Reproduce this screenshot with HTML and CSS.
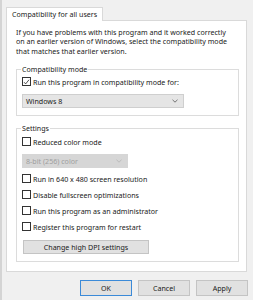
FILE: index.html
```html
<!DOCTYPE html>
<html>
<head>
<meta charset="utf-8">
<link rel="stylesheet" href="styles.css">
</head>
<body>
<div class="window">
  <div class="tabs"><div class="tab">Compatibility for all users</div></div>
  <div class="panel">
    <p class="intro">If you have problems with this program and it worked correctly<br>on an earlier version of Windows, select the compatibility mode<br>that matches that earlier version.</p>
    <fieldset class="group g1">
      <legend>Compatibility mode</legend>
      <div class="row"><span class="cb checked"><svg viewBox="0 0 8 8" width="8" height="8"><polyline points="1.2,4.2 3,6.2 6.9,1.4" fill="none" stroke="#222" stroke-width="0.9"/></svg></span><span>Run this program in compatibility mode for:</span></div>
      <div class="select wide"><span>Windows 8</span><svg class="chev" viewBox="0 0 6 4" width="6" height="4"><polyline points="0.5,0.8 3,3.2 5.5,0.8" fill="none" stroke="#555" stroke-width="0.8"/></svg></div>
    </fieldset>
    <fieldset class="group g2">
      <legend>Settings</legend>
      <div class="row first"><span class="cb"></span><span>Reduced color mode</span></div>
      <div class="select narrow disabled"><span>8-bit (256) color</span><svg class="chev" viewBox="0 0 6 4" width="6" height="4"><polyline points="0.5,0.8 3,3.2 5.5,0.8" fill="none" stroke="#b4b4b4" stroke-width="0.8"/></svg></div>
      <div class="row after"><span class="cb"></span><span>Run in 640 x 480 screen resolution</span></div>
      <div class="row"><span class="cb"></span><span>Disable fullscreen optimizations</span></div>
      <div class="row"><span class="cb"></span><span>Run this program as an administrator</span></div>
      <div class="row"><span class="cb"></span><span>Register this program for restart</span></div>
      <div class="btn dpi">Change high DPI settings</div>
    </fieldset>
  </div>
  <div class="buttons">
    <div class="btn action default">OK</div>
    <div class="btn action">Cancel</div>
    <div class="btn action">Apply</div>
  </div>
</div>
</body>
</html>
```
FILE: styles.css
```css
html, body {
  margin: 0;
  padding: 0;
}
body {
  width: 253px;
  height: 300px;
  overflow: hidden;
  background: #f0f0f0;
  font-family: "Noto Sans", "DejaVu Sans", sans-serif;
  font-size: 7.1px;
  color: #1a1a1a;
}
.window {
  box-sizing: border-box;
  height: 300px;
  border-left: 2px solid #d4d4d4;
  padding: 0 6px 0 4px;
}
.tabs {
  padding-top: 7px;
  height: 14px;
  position: relative;
  z-index: 1;
}
.tab {
  display: inline-block;
  box-sizing: border-box;
  height: 14px;
  line-height: 13px;
  padding: 0 5px;
  background: #fff;
  border: 1px solid #d9d9d9;
  border-bottom: none;
}
.panel {
  box-sizing: border-box;
  width: 241px;
  height: 252px;
  margin-top: -1px;
  background: #fff;
  border: 1px solid #d9d9d9;
  padding: 7px 7px 0 9px;
}
.intro {
  margin: 0;
  line-height: 9.3px;
}
.group {
  margin: 0;
  border: 1px solid #dcdcdc;
  padding: 0 5px 7px 5px;
  min-width: 0;
}
.g1 {
  margin-top: 9px;
}
.g2 {
  margin-top: 8px;
}
legend {
  line-height: 9px;
  padding: 0 1px;
  margin-left: -1px;
}
.row {
  display: flex;
  align-items: center;
  gap: 2px;
  height: 16px;
}
.g2 .row.first {
  margin-top: 1px;
}
.row.after {
  margin-top: 3px;
}
.cb {
  box-sizing: border-box;
  width: 9px;
  height: 9px;
  border: 1px solid #333;
  background: #fff;
  display: flex;
  align-items: center;
  justify-content: center;
  flex: none;
}
.cb svg {
  display: block;
}
.select {
  box-sizing: border-box;
  height: 14px;
  margin-top: 4px;
  background: #e5e5e5;
  border: 1px solid #cfcfcf;
  display: flex;
  align-items: center;
  justify-content: space-between;
  padding: 0 5px 0 3px;
}
.select.wide {
  width: 162px;
}
.select.narrow {
  width: 106px;
}
.select.disabled {
  background: #d6d6d6;
  border-color: #d6d6d6;
  color: #9e9e9e;
}
.chev {
  display: block;
}
.btn {
  box-sizing: border-box;
  height: 14px;
  background: #e1e1e1;
  border: 1px solid #c4c4c4;
  display: flex;
  align-items: center;
  justify-content: center;
}
.dpi {
  width: 126px;
  margin-top: 5px;
  margin-left: 1px;
}
.buttons {
  display: flex;
  justify-content: flex-end;
  gap: 6px;
  margin-top: 8px;
  margin-right: -1px;
}
.action {
  width: 52px;
  height: 16px;
}
.action.default {
  border-color: #3b8ad8;
}
```
